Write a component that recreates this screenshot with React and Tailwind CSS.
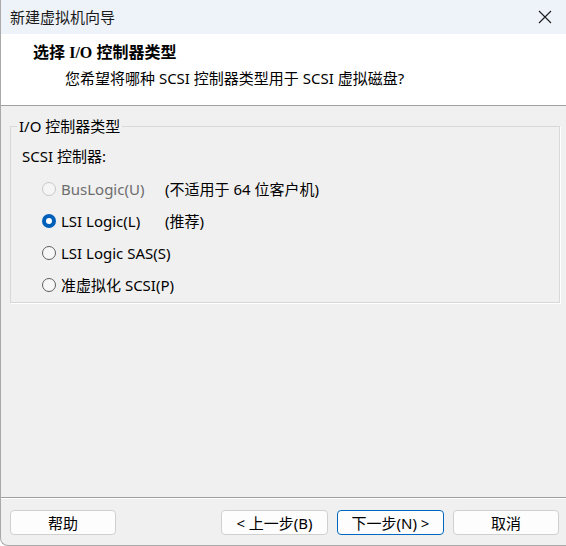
import React from "react";

const font = { fontFamily: '"Noto Sans", "Noto Sans CJK SC", sans-serif' };

function Radio({ checked, disabled }) {
  if (checked) {
    return (
      <span className="flex h-[14px] w-[14px] shrink-0 items-center justify-center rounded-full bg-[#005fb8]">
        <span className="h-[6px] w-[6px] rounded-full bg-white" />
      </span>
    );
  }
  return (
    <span
      className={
        disabled
          ? "h-[14px] w-[14px] shrink-0 rounded-full border border-[#c8c8c8] bg-[#f5f5f5]"
          : "h-[14px] w-[14px] shrink-0 rounded-full border border-[#5f5f5f] bg-[#f7f7f7]"
      }
    />
  );
}

function Option({ label, note, checked, disabled }) {
  return (
    <div className="flex h-[32px] items-center whitespace-nowrap">
      <div className="ml-[31px] flex min-w-[123px] shrink-0 items-center gap-[5px]">
        <Radio checked={checked} disabled={disabled} />
        <span className={disabled ? "text-[#6d6d6d]" : "text-black"}>{label}</span>
      </div>
      {note && <span className="text-black">{note}</span>}
    </div>
  );
}

function Button({ children, primary, className = "" }) {
  return (
    <button
      className={
        "flex h-[25px] items-center justify-center whitespace-nowrap rounded-[4px] border bg-[#fdfdfd] text-[15px] leading-[20px] text-black " +
        (primary ? "border-[#0067c0] " : "border-[#d0d0d0] ") +
        className
      }
    >
      {children}
    </button>
  );
}

export default function App() {
  return (
    <div
      style={font}
      className="flex h-[546px] w-[566px] flex-col overflow-hidden rounded-bl-[8px] border-b border-l border-[#a9a9a9] bg-[#f0f0f0] text-[15px] leading-[20px] text-black"
    >
      {/* title bar */}
      <div className="flex h-[34px] shrink-0 items-center justify-between bg-[#eef3f9] pl-[9px] pr-[12px]">
        <span className="text-[#1b1b1b]">新建虚拟机向导</span>
        <svg width="14" height="14" viewBox="0 0 14 14" className="mr-[2px]">
          <path d="M1 1 L13 13 M13 1 L1 13" stroke="#1b1b1b" strokeWidth="1.1" fill="none" />
        </svg>
      </div>

      {/* header */}
      <div className="h-[72px] shrink-0 border-b border-[#a0a0a0] bg-white">
        <div className="pl-[32px] pt-[8px] text-[16px] font-bold">
          选择 <span style={{ fontFamily: '"Liberation Serif", serif' }}>I/O</span> 控制器类型
        </div>
        <div className="mt-[5px] pl-[64px]">您希望将哪种 SCSI 控制器类型用于 SCSI 虚拟磁盘?</div>
      </div>

      {/* body */}
      <div className="flex-1">
        <fieldset className="ml-[9px] mt-[10px] h-[187px] w-[550px] border border-[#d8d8d8] shadow-[1px_1px_0_#ffffff]">
          <legend className="ml-[6px] px-[2px]">I/O 控制器类型</legend>
          <div className="mt-[10px] pl-[11px]">SCSI 控制器:</div>
          <div className="mt-[7px]">
            <Option label="BusLogic(U)" note="(不适用于 64 位客户机)" disabled />
            <Option label="LSI Logic(L)" note="(推荐)" checked />
            <Option label="LSI Logic SAS(S)" />
            <Option label="准虚拟化 SCSI(P)" />
          </div>
        </fieldset>
      </div>

      {/* footer */}
      <div className="h-[48px] shrink-0 border-t border-[#a0a0a0] shadow-[inset_0_1px_0_#ffffff]">
        <div className="mt-[12px] flex items-center pl-[9px] pr-[7px]">
          <Button className="w-[106px]">帮助</Button>
          <div className="flex-1" />
          <div className="flex gap-[9px]">
            <Button className="w-[107px]">&lt; 上一步(B)</Button>
            <Button primary className="w-[107px]">下一步(N) &gt;</Button>
            <Button className="w-[106px]">取消</Button>
          </div>
        </div>
      </div>
    </div>
  );
}
